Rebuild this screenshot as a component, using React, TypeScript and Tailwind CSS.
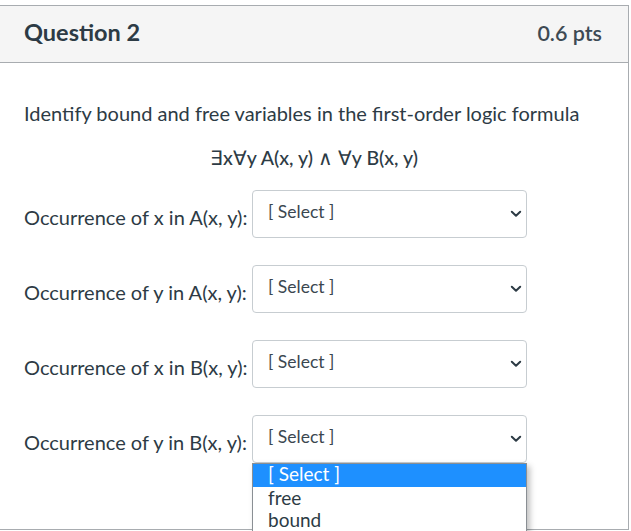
import React from 'react';

const rows = [
  'Occurrence of x in A(x, y):',
  'Occurrence of y in A(x, y):',
  'Occurrence of x in B(x, y):',
  'Occurrence of y in B(x, y):',
];

function Chevron() {
  return (
    <svg width="12" height="8" viewBox="0 0 12 8" className="text-[#2d3b45]">
      <path d="M1.8 1.8 L6 5.8 L10.2 1.8" fill="none" stroke="currentColor" strokeWidth="2" strokeLinecap="round" strokeLinejoin="round" />
    </svg>
  );
}

function FakeSelect({ open }: { open?: boolean }) {
  return (
    <div className="relative">
      <div className="w-[275px] h-[48px] bg-white border border-[#c7cdd1] rounded-[4px] flex items-center justify-between pl-[15px] pr-[4px]">
        <span className="text-[17.5px] text-[#3b4750] -mt-[4px]">[ Select ]</span>
        <Chevron />
      </div>
      {open && (
        <div className="absolute left-0 top-[48px] w-[275px] h-[80px] bg-white border border-b-0 border-[#8a8f94] shadow-[3px_3px_6px_rgba(0,0,0,0.25)] text-[19px] leading-[23px] text-[#2d3b45] z-10">
          <div className="bg-[#1e90ff] text-white pl-[15px] h-[23px] leading-[20px]">[ Select ]</div>
          <div className="pl-[15px] leading-[21px]">free</div>
          <div className="pl-[15px] leading-[24px]">bound</div>
        </div>
      )}
    </div>
  );
}

export default function App() {
  return (
    <div className="h-[531px] overflow-hidden bg-white" style={{ fontFamily: 'Lato, "Open Sans", sans-serif' }}>
      <div className="mt-[5px] w-[629px] h-[525px] border border-l-0 border-[#a8acb0]">
        <div className="h-[57px] bg-[#f5f5f5] border-b border-[#a8acb0] flex items-center justify-between pl-[24px] pr-[26px] text-[#2d3b45]">
          <h2 className="text-[23.5px] font-bold -mt-[2px]">Question 2</h2>
          <span className="text-[21.5px] font-semibold text-[#3d4a54] -mt-[2px]">0.6 pts</span>
        </div>
        <div className="pl-[24px] pt-[36px] text-[#2d3b45]">
          <p className="text-[20px] leading-[28px]">Identify bound and free variables in the first-order logic formula</p>
          <p className="text-[19.5px] font-medium text-center leading-[28px] mt-[17px] -ml-[24px]">∃x∀y A(x, y) ∧ ∀y B(x, y)</p>
          <div className="flex flex-col gap-[27px] mt-[18px]">
            {rows.map((label, i) => (
              <div key={label} className="flex items-center">
                <span className="text-[20px] w-[228px] mt-[6px]">{label}</span>
                <FakeSelect open={i === rows.length - 1} />
              </div>
            ))}
          </div>
        </div>
      </div>
    </div>
  );
}
